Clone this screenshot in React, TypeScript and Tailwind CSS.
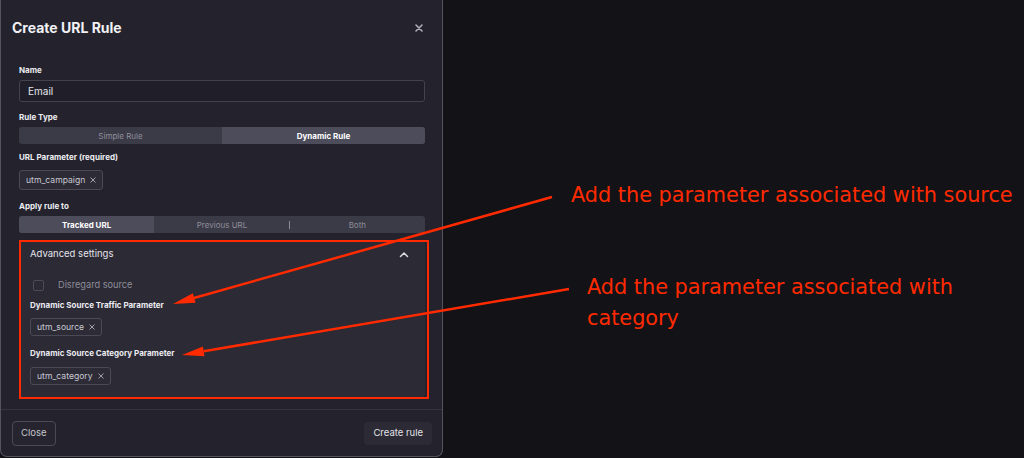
import React from "react";

const Label = ({ children }: { children: React.ReactNode }) => (
  <div className="h-[12px] leading-[12px] text-[8px] font-bold text-[#ececf1]">{children}</div>
);

const Chip = ({ label, h = "h-[20px]" }: { label: string; h?: string }) => (
  <div className={`inline-flex items-center self-start ${h} pl-[6px] pr-[6px] gap-[5px] rounded-[3px] border border-[#4b4a56] bg-[#2c2b36] text-[8.6px] text-[#c9c9d2]`}>
    <span>{label}</span>
    <svg width="6" height="6" viewBox="0 0 6 6">
      <path d="M0.8 0.8 L5.2 5.2 M5.2 0.8 L0.8 5.2" stroke="#a3a2ad" strokeWidth="1" strokeLinecap="round" />
    </svg>
  </div>
);

export default function App() {
  return (
    <div className="relative w-[1024px] h-[458px] bg-[#131217] overflow-hidden font-['Inter',sans-serif]">
      <div className="w-[443px] h-[457px] bg-[#24232d] border-x border-b border-[#55545e] rounded-b-[7px] flex flex-col">
        {/* header */}
        <div className="h-[54px] flex items-center justify-between pl-[11px] pr-[19px]">
          <div className="text-[14px] font-bold text-[#f1f1f5]">Create URL Rule</div>
          <svg width="8" height="8" viewBox="0 0 8 8" className="mt-[2px]">
            <path d="M1 1 L7 7 M7 1 L1 7" stroke="#b3b2bc" strokeWidth="1.5" strokeLinecap="round" />
          </svg>
        </div>
        {/* body */}
        <div className="flex flex-col pl-[18px] pr-[17px]">
          <div className="mt-[10px]"><Label>Name</Label></div>
          <div className="mt-[4px] h-[22px] rounded-[3px] border border-[#43424d] bg-[#201f29] flex items-center pl-[8px] text-[10px] text-[#e6e6ec]">
            Email
          </div>
          <div className="mt-[9px]"><Label>Rule Type</Label></div>
          <div className="mt-[4px] h-[17px] rounded-[3px] bg-[#3b3a47] flex text-[8px] overflow-hidden">
            <div className="flex-1 flex items-center justify-center text-[#8f8e9a]">Simple Rule</div>
            <div className="flex-1 flex items-center justify-center bg-[#4d4c5b] text-white font-bold">Dynamic Rule</div>
          </div>
          <div className="mt-[7px]"><Label>URL Parameter (required)</Label></div>
          <div className="mt-[7px] flex"><Chip label="utm_campaign" /></div>
          <div className="mt-[10px]"><Label>Apply rule to</Label></div>
          <div className="mt-[4px] h-[17px] rounded-[3px] bg-[#3b3a47] flex text-[8px] overflow-hidden">
            <div className="flex-1 flex items-center justify-center bg-[#4d4c5b] text-white font-bold">Tracked URL</div>
            <div className="flex-1 flex items-center justify-center text-[#8f8e9a] relative">
              Previous URL
              <span className="absolute right-0 top-[5px] h-[8px] w-px bg-[#8a8996]" />
            </div>
            <div className="flex-1 flex items-center justify-center text-[#8f8e9a]">Both</div>
          </div>
          {/* accordion */}
          <div className="mt-[8px] h-[156px] rounded-[3px] bg-[#2b2a35] flex flex-col px-[11px]">
            <div className="h-[26px] flex items-center justify-between">
              <div className="text-[9.5px] text-[#e4e4ea]">Advanced settings</div>
              <svg width="10" height="7" viewBox="0 0 10 7" className="mr-[5px]">
                <path d="M1.5 5.5 L5 2 L8.5 5.5" fill="none" stroke="#d8d8df" strokeWidth="1.5" strokeLinecap="round" strokeLinejoin="round" />
              </svg>
            </div>
            <div className="mt-[12px] h-[12px] flex items-center">
              <div className="ml-[3px] w-[11px] h-[11px] rounded-[2px] border border-[#4c4b57] bg-[#2b2a35]" />
              <div className="ml-[14px] text-[9.2px] text-[#8e8d99]">Disregard source</div>
            </div>
            <div className="mt-[8px]"><Label>Dynamic Source Traffic Parameter</Label></div>
            <div className="mt-[7px] flex"><Chip label="utm_source" h="h-[18px]" /></div>
            <div className="mt-[11px]"><Label>Dynamic Source Category Parameter</Label></div>
            <div className="mt-[8px] flex"><Chip label="utm_category" h="h-[18px]" /></div>
          </div>
        </div>
        {/* footer */}
        <div className="mt-auto h-[47px] border-t border-[#36353f] flex items-center justify-between pl-[11px] pr-[10px]">
          <button className="h-[25px] px-[8px] rounded-[4px] border border-[#4b4a56] bg-[#26252f] text-[9.5px] text-[#c4c4cc]">
            Close
          </button>
          <button className="h-[23px] px-[9px] rounded-[4px] bg-[#2c2b35] text-[9.5px] text-[#e2e2e8]">
            Create rule
          </button>
        </div>
      </div>

      {/* red annotation box */}
      <div className="absolute left-[19px] top-[240px] w-[410px] h-[159px] border-[2.5px] border-[#ff2a00] pointer-events-none" />

      {/* arrows */}
      <svg className="absolute inset-0 pointer-events-none" width="1024" height="458" viewBox="0 0 1024 458">
        <line x1="552" y1="197" x2="194" y2="298" stroke="#ff2a00" strokeWidth="2.5" />
        <polygon points="173,304 195.6,302.8 192.8,293.2" fill="#ff2a00" />
        <line x1="569" y1="289" x2="203.7" y2="351.3" stroke="#ff2a00" strokeWidth="2.5" />
        <polygon points="182,355 204.5,356.2 202.9,346.4" fill="#ff2a00" />
      </svg>

      {/* annotation texts */}
      <div className="absolute left-[571px] top-[181px] text-[20.8px] leading-[28px] text-[#ff2a00] font-['DejaVu_Sans',sans-serif] whitespace-nowrap">
        Add the parameter associated with source
      </div>
      <div className="absolute left-[587px] top-[272px] w-[430px] text-[20.8px] leading-[31px] text-[#ff2a00] font-['DejaVu_Sans',sans-serif]">
        Add the parameter associated with
        <br />
        category
      </div>
    </div>
  );
}
